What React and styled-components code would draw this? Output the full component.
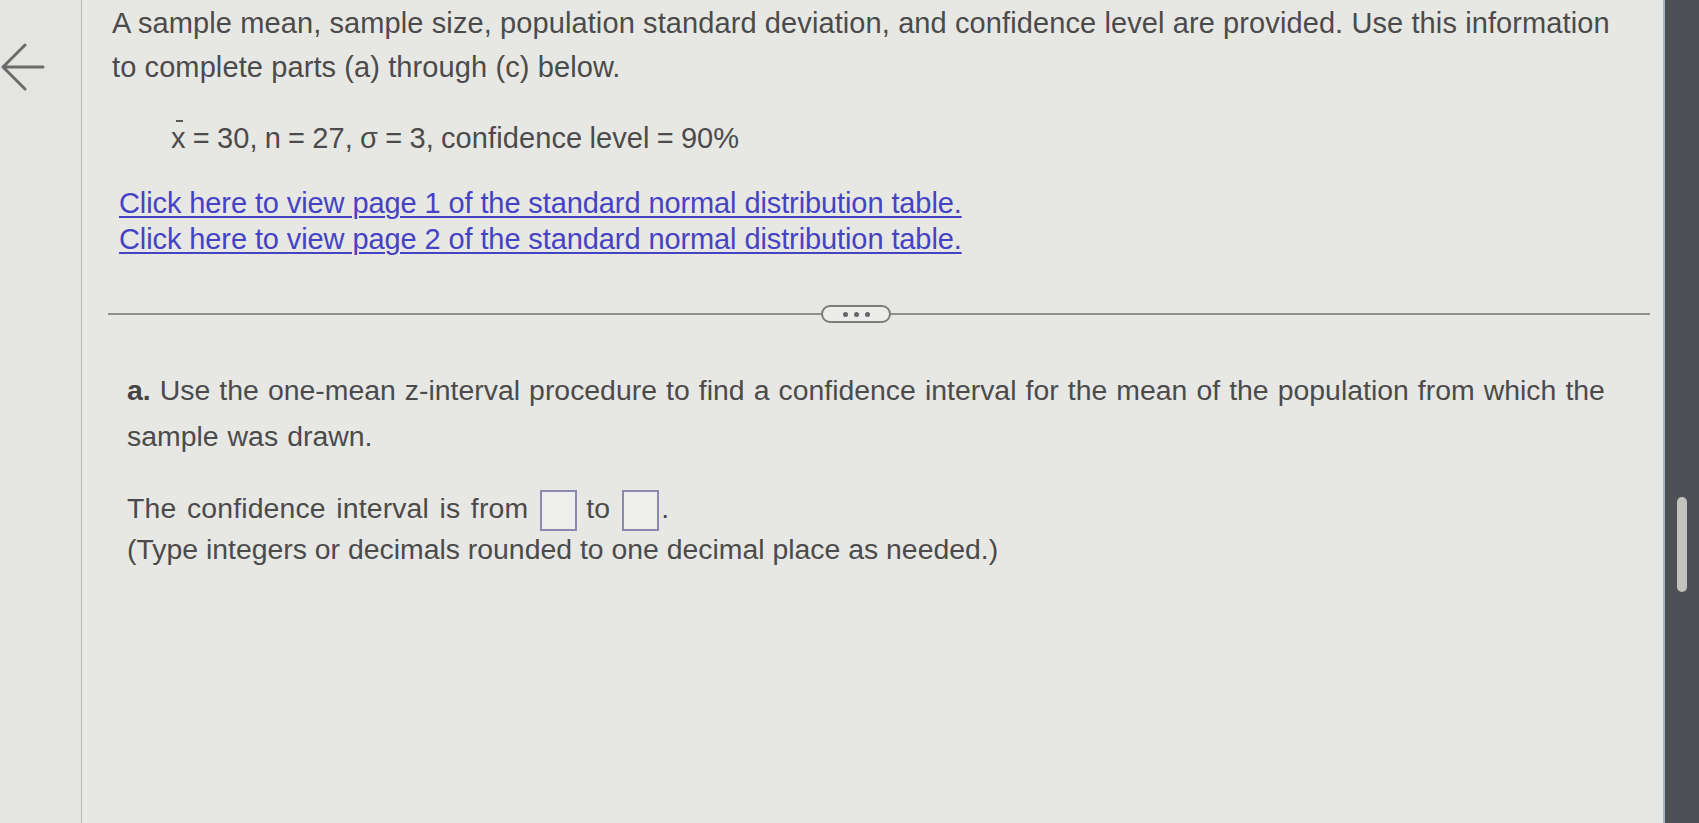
import styled, { createGlobalStyle } from 'styled-components'

const GlobalStyle = createGlobalStyle`
 html, body {
  margin: 0;
  padding: 0;
  overflow: hidden;
  background-color: #e7e7e4;
 }
 body {
  font-family: 'Liberation Sans', Arial, sans-serif;
 }
`

const Screen = styled.div`
 display: flex;
 width: 1699px;
 height: 823px;
 background-color: #e7e7e4;
`

const LeftRail = styled.div`
 width: 82px;
 flex-shrink: 0;
 border-right: 1px solid #b8b8b5;
 background-color: #e4e4e1;
 padding-top: 43px;
 box-sizing: border-box;
`

const BackButton = styled.button`
 display: block;
 background: none;
 border: 0;
 padding: 0;
 margin: 0;
 cursor: pointer;
`

const Content = styled.div`
 flex: 1;
 padding: 1px 13px 0 30px;
 color: #4b4b4b;
 font-size: 29px;
 line-height: 40px;
 letter-spacing: 0.1px;
`

const Paragraph = styled.p`
 margin: 0;
 line-height: ${(p) => p.$lh || 44}px;
 word-spacing: ${(p) => p.$ws || 0}px;
`

const Formula = styled.p`
 margin: 29px 0 0 59px;
 word-spacing: -1px;
`

const XBar = styled.span`
 position: relative;
 display: inline-block;
 &::before {
  content: '';
  position: absolute;
  left: 5px;
  top: 2px;
  width: 7px;
  height: 2px;
  background-color: #5a5a5a;
 }
`

const LinkList = styled.div`
 display: flex;
 flex-direction: column;
 margin: 27px 0 0 7px;
 line-height: 36px;
 letter-spacing: -0.1px;
`

const TableLink = styled.a`
 color: #4543c4;
 text-decoration: underline;
 text-decoration-thickness: 2px;
 text-underline-offset: 3px;
 align-self: flex-start;
 cursor: pointer;
`

const Divider = styled.div`
 display: flex;
 align-items: center;
 margin: 48px 0 0 -4px;
 height: 18px;
`

const Rule = styled.div`
 height: 2px;
 background-color: #8f8f8d;
 flex: ${(p) => (p.$width ? `0 0 ${p.$width}px` : '1')};
`

const MorePill = styled.button`
 display: flex;
 align-items: center;
 justify-content: center;
 gap: 6px;
 width: 70px;
 height: 18px;
 box-sizing: border-box;
 border: 2px solid #7c7c7a;
 border-radius: 9px;
 background-color: #ececea;
 padding: 0;
 cursor: pointer;
`

const Dot = styled.span`
 width: 5px;
 height: 5px;
 border-radius: 50%;
 background-color: #666;
`

const Part = styled.div`
 margin: 44px 0 0 15px;
 font-size: 28.4px;
 letter-spacing: 0;
`

const Bold = styled.b`
 font-weight: bold;
 color: #444;
`

const AnswerLine = styled.p`
 margin: 28px 0 0 0;
 line-height: 42px;
 word-spacing: 2.5px;
 letter-spacing: 0.15px;
`

const AnswerBox = styled.input`
 display: inline-block;
 vertical-align: middle;
 width: 37px;
 height: 41px;
 box-sizing: border-box;
 border: 2px solid #8a89b2;
 background-color: #eeeeec;
 margin: 0 ${(p) => p.$right || 9}px 0 ${(p) => p.$left || 12}px;
 padding: 0;
 font-size: 20px;
`

const Hint = styled.p`
 margin: 0;
 line-height: 36px;
`

const ScrollRail = styled.div`
 width: 36px;
 flex-shrink: 0;
 background-color: #4d5054;
 border-left: 2px solid #a3b2c6;
 box-sizing: border-box;
 padding-top: 497px;
 display: flex;
 justify-content: center;
 align-items: flex-start;
`

const Thumb = styled.div`
 width: 10px;
 height: 95px;
 border-radius: 5px;
 background-color: #c3c2bf;
`

function ArrowIcon() {
 return (
  <svg width='46' height='48' viewBox='0 0 46 48' fill='none'>
   <path
    d='M3 24 H43 M25 2 L3 24 L25 46'
    stroke='#6b6b6b'
    strokeWidth='3'
    strokeLinecap='round'
    strokeLinejoin='round'
   />
  </svg>
 )
}

export default function App() {
 return (
  <>
   <GlobalStyle />
   <Screen>
    <LeftRail>
     <BackButton aria-label='Back'>
      <ArrowIcon />
     </BackButton>
    </LeftRail>
    <Content>
     <Paragraph>
      A sample mean, sample size, population standard deviation, and
      confidence level are provided. Use this information
      <br />
      to complete parts (a) through (c) below.
     </Paragraph>
     <Formula>
      <XBar>x</XBar> = 30, n = 27, σ = 3, confidence level = 90%
     </Formula>
     <LinkList>
      <TableLink>Click here to view page 1 of the standard normal distribution table.</TableLink>
      <TableLink>Click here to view page 2 of the standard normal distribution table.</TableLink>
     </LinkList>
     <Divider>
      <Rule $width={713} />
      <MorePill aria-label='More'>
       <Dot />
       <Dot />
       <Dot />
      </MorePill>
      <Rule />
     </Divider>
     <Part>
      <Paragraph $lh={46} $ws={1.2}>
       <Bold>a.</Bold> Use the one-mean z-interval procedure to find a
       confidence interval for the mean of the population from which the
       <br />
       sample was drawn.
      </Paragraph>
      <AnswerLine>
       The confidence interval is from
       <AnswerBox type='text' aria-label='lower bound' />
       to
       <AnswerBox type='text' aria-label='upper bound' $right={2} />.
      </AnswerLine>
      <Hint>(Type integers or decimals rounded to one decimal place as needed.)</Hint>
     </Part>
    </Content>
    <ScrollRail>
     <Thumb />
    </ScrollRail>
   </Screen>
  </>
 )
}
